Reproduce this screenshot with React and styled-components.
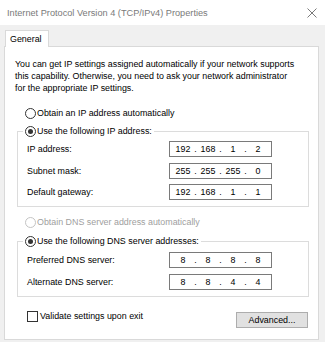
import React from 'react';
import styled, { createGlobalStyle } from 'styled-components';

const GlobalStyle = createGlobalStyle`
  html, body {
    margin: 0;
    padding: 0;
  }
  body {
    font-family: "Liberation Sans", Arial, sans-serif;
    font-size: 8.9px;
    color: #000;
  }
`;

const Window = styled.div`
  width: 325px;
  height: 342px;
  display: flex;
  flex-direction: column;
  background-color: #f0f0f0;
  overflow: hidden;
`;

const TitleBar = styled.div`
  height: 25px;
  flex: none;
  display: flex;
  align-items: center;
  justify-content: space-between;
  background-color: #fff;
  padding: 0 8px 0 7px;
  box-sizing: border-box;
  color: #7a7a7a;
  font-size: 9.2px;
`;

const Body = styled.div`
  flex: 1;
  display: flex;
  flex-direction: column;
  padding: 5px 6px 2px 4px;
  min-height: 0;
`;

const TabStrip = styled.div`
  display: flex;
  padding-left: 1px;
  position: relative;
  z-index: 1;
`;

const Tab = styled.div`
  height: 17px;
  line-height: 16px;
  padding: 0 6px 0 4px;
  background-color: #fff;
  border: 1px solid #d9d9d9;
  border-bottom: none;
  margin-bottom: -1px;
  box-sizing: border-box;
`;

const Panel = styled.div`
  flex: 1;
  display: flex;
  flex-direction: column;
  background-color: #fff;
  border: 1px solid #d9d9d9;
  padding: 11px 9px 0 10px;
`;

const Intro = styled.p`
  margin: 0;
  line-height: 12px;
  white-space: nowrap;
`;

const Choice = styled.label`
  display: flex;
  align-items: center;
  height: 16px;
  margin: ${(p) => p.$top || 0}px 0 0 10px;
  color: ${(p) => (p.$disabled ? '#a0a0a0' : '#000')};
`;

const Radio = styled.span`
  width: 11px;
  height: 11px;
  box-sizing: border-box;
  border-radius: 50%;
  border: 1px solid ${(p) => (p.$disabled ? '#c4c4c4' : '#333')};
  background-color: #fff;
  display: flex;
  align-items: center;
  justify-content: center;
  margin-right: 1px;
  &::after {
    content: '';
    width: 5px;
    height: 5px;
    border-radius: 50%;
    background-color: ${(p) => (p.$checked ? '#333' : 'transparent')};
  }
`;

const Group = styled.fieldset`
  margin: ${(p) => p.$top}px 0 0 2px;
  border: 1px solid #dcdcdc;
  padding: ${(p) => p.$padTop}px 0 6px 9px;
  min-width: 0;
`;

const Legend = styled.legend`
  padding: 0 2px;
  margin-left: -4px;
`;

const LegendChoice = styled.span`
  display: flex;
  align-items: center;
  height: 16px;
`;

const Fields = styled.div`
  display: grid;
  grid-template-columns: 142px 103px;
  row-gap: 5.5px;
  align-items: center;
`;

const FieldLabel = styled.span`
  line-height: 16px;
`;

const IpBox = styled.div`
  height: 16px;
  box-sizing: border-box;
  border: 1px solid #7a7a7a;
  background-color: #fff;
  padding: 0 3px;
  display: grid;
  grid-template-columns: 20px 5px 20px 5px 20px 5px 20px;
  align-items: center;
  justify-items: center;
  line-height: 14px;
`;

const Footer = styled.div`
  display: flex;
  justify-content: space-between;
  align-items: flex-start;
  margin: 13px 1px 0 12px;
`;

const CheckRow = styled.label`
  display: flex;
  align-items: center;
  height: 13px;
`;

const CheckBox = styled.span`
  width: 11px;
  height: 11px;
  box-sizing: border-box;
  border: 1px solid #333;
  background-color: #fff;
  margin-right: 2px;
`;

const Button = styled.button`
  width: 72px;
  height: 16px;
  margin-top: 2px;
  padding: 0;
  box-sizing: border-box;
  background-color: #e1e1e1;
  border: 1px solid #adadad;
  font-family: inherit;
  font-size: 8.9px;
  color: #000;
`;

function Close() {
  return (
    <svg width="10" height="10" viewBox="0 0 10 10">
      <path d="M0.5 0.5 L9.5 9.5 M9.5 0.5 L0.5 9.5" stroke="#7a7a7a" strokeWidth="1" fill="none" />
    </svg>
  );
}

function IpField({ value }) {
  const parts = value.split('.');
  return (
    <IpBox>
      {parts.map((p, i) => (
        <React.Fragment key={i}>
          {i > 0 && <span>.</span>}
          <span>{p}</span>
        </React.Fragment>
      ))}
    </IpBox>
  );
}

export default function App() {
  return (
    <>
      <GlobalStyle />
      <Window>
        <TitleBar>
          <span>Internet Protocol Version 4 (TCP/IPv4) Properties</span>
          <Close />
        </TitleBar>
        <Body>
          <TabStrip>
            <Tab>General</Tab>
          </TabStrip>
          <Panel>
            <Intro>
              You can get IP settings assigned automatically if your network supports
              <br />
              this capability. Otherwise, you need to ask your network administrator
              <br />
              for the appropriate IP settings.
            </Intro>

            <Choice $top={11}>
              <Radio />
              Obtain an IP address automatically
            </Choice>

            <Group $top={2} $padTop={2}>
              <Legend>
                <LegendChoice>
                  <Radio $checked />
                  Use the following IP address:
                </LegendChoice>
              </Legend>
              <Fields>
                <FieldLabel>IP address:</FieldLabel>
                <IpField value="192.168.1.2" />
                <FieldLabel>Subnet mask:</FieldLabel>
                <IpField value="255.255.255.0" />
                <FieldLabel>Default gateway:</FieldLabel>
                <IpField value="192.168.1.1" />
              </Fields>
            </Group>

            <Choice $top={7} $disabled>
              <Radio $disabled />
              Obtain DNS server address automatically
            </Choice>

            <Group $top={3} $padTop={3}>
              <Legend>
                <LegendChoice>
                  <Radio $checked />
                  Use the following DNS server addresses:
                </LegendChoice>
              </Legend>
              <Fields>
                <FieldLabel>Preferred DNS server:</FieldLabel>
                <IpField value="8.8.8.8" />
                <FieldLabel>Alternate DNS server:</FieldLabel>
                <IpField value="8.8.4.4" />
              </Fields>
            </Group>

            <Footer>
              <CheckRow>
                <CheckBox />
                Validate settings upon exit
              </CheckRow>
              <Button>Advanced...</Button>
            </Footer>
          </Panel>
        </Body>
      </Window>
    </>
  );
}
